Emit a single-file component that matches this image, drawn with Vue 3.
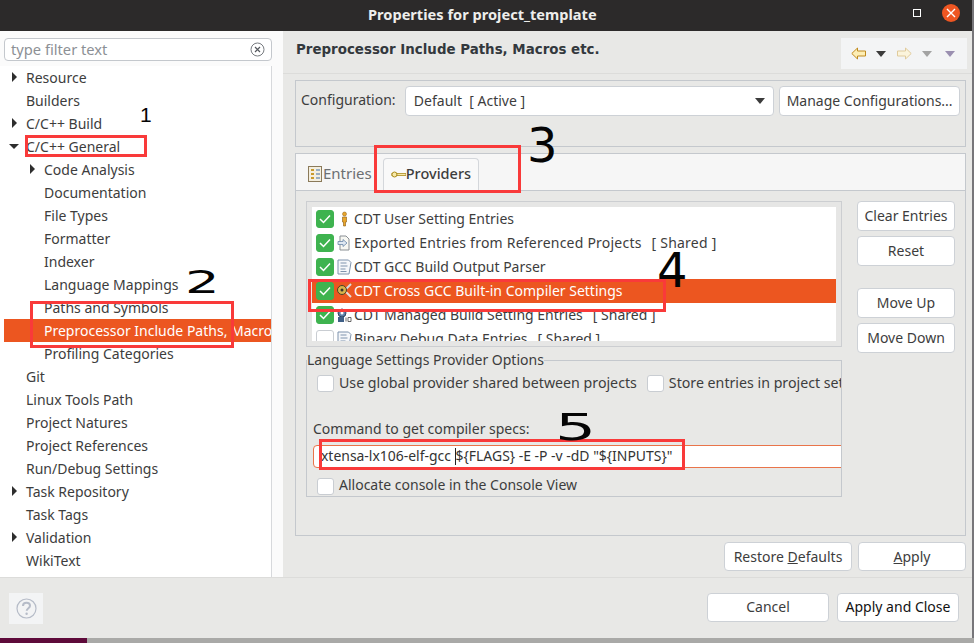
<script setup>
const tree = [
  { t: 'Resource', a: 'r' }, { t: 'Builders' }, { t: 'C/C++ Build', a: 'r' }, { t: 'C/C++ General', a: 'd' },
  { t: 'Code Analysis', a: 'r', c: 1 }, { t: 'Documentation', c: 1 }, { t: 'File Types', c: 1 }, { t: 'Formatter', c: 1 },
  { t: 'Indexer', c: 1 }, { t: 'Language Mappings', c: 1 }, { t: 'Paths and Symbols', c: 1 },
  { t: 'Preprocessor Include Paths, Macros etc.', c: 1, s: 1 }, { t: 'Profiling Categories', c: 1 },
  { t: 'Git' }, { t: 'Linux Tools Path' }, { t: 'Project Natures' }, { t: 'Project References' },
  { t: 'Run/Debug Settings' }, { t: 'Task Repository', a: 'r' }, { t: 'Task Tags' }, { t: 'Validation', a: 'r' }, { t: 'WikiText' }
]
const providers = [
  { t: 'CDT User Setting Entries', on: 1, i: 'user' },
  { t: 'Exported Entries from Referenced Projects', sh: 1, on: 1, i: 'export', wide: 1 },
  { t: 'CDT GCC Build Output Parser', on: 1, i: 'doc' },
  { t: 'CDT Cross GCC Built-in Compiler Settings', on: 1, i: 'tool', s: 1 },
  { t: 'CDT Managed Build Setting Entries', sh: 1, on: 1, i: 'managed' },
  { t: 'Binary Debug Data Entries', sh: 1, i: 'doc' }
]
</script>

<template>
  <div class="screen">
    <div class="window">
      <header class="title">
        <span class="title-text">Properties for project_template</span>
        <span class="win-max"></span>
        <span class="win-close">
          <svg width="12" height="12" viewBox="0 0 12 12"><path d="M2 2l8 8M10 2l-8 8" stroke="#fff" stroke-width="1.4" fill="none"/></svg>
        </span>
      </header>

      <div class="body">
        <aside class="side">
          <div class="filter">
            <span class="filter-text">type filter text</span>
            <svg width="15" height="15" viewBox="0 0 15 15"><circle cx="7.5" cy="7.5" r="6.5" fill="none" stroke="#777b80"/><path d="M5 5l5 5M10 5l-5 5" stroke="#55595e" stroke-width="1.2"/></svg>
          </div>
          <ul class="tree">
            <li v-for="n in tree" :key="n.t" class="node" :class="{ child: n.c, sel: n.s }">
              <span v-if="n.a === 'r'" class="arrow-r"></span>
              <span v-if="n.a === 'd'" class="arrow-d"></span>
              <span class="node-text">{{ n.t }}</span>
            </li>
          </ul>
        </aside>

        <main class="main">
          <div class="head">
            <h1>Preprocessor Include Paths, Macros etc.</h1>
            <div class="nav">
              <svg width="15" height="13" viewBox="0 0 15 13"><path d="M.8 6.500L6.500 1v3h8v5h-8v3z" fill="#fdeeb5" stroke="#c08a1e"/></svg>
              <span class="tri dark"></span>
              <svg class="fwd" width="15" height="13" viewBox="0 0 15 13"><path d="M14.200 6.500L8.500 1v3h-8v5h8v3z" fill="#fbf4dc" stroke="#e0cb9c"/></svg>
              <span class="tri grey"></span>
              <span class="tri purple"></span>
            </div>
          </div>

          <section class="config">
            <label>Configuration:</label>
            <div class="select"><span class="lift">Default&nbsp; [ Active ]</span><span class="tri dark"></span></div>
            <button class="btn manage">Manage Configurations...</button>
          </section>

          <section class="folder">
            <div class="tabs">
              <div class="tab">
                <svg width="14" height="16" viewBox="0 0 14 16"><rect x=".5" y=".5" width="13" height="15" fill="#f4efe0" stroke="#8b7a5a"/><path d="M3 3h3v2H3zM3 7h3v2H3zM3 11h3v2H3z" fill="#c99a2e"/><path d="M8 4h4M8 8h4M8 12h4" stroke="#3f6fa8"/></svg>
                <span class="lift">Entries</span>
              </div>
              <div class="tab active">
                <svg width="15" height="9" viewBox="0 0 15 9"><circle cx="3.500" cy="4.500" r="2.500" fill="#f7e9a8" stroke="#a98a1a"/><path d="M6 3.500h9v2H6z" fill="#f7e9a8" stroke="#a98a1a" stroke-width=".8"/><path d="M0 3v3" stroke="#a98a1a"/></svg>
                <span class="lift2">Providers</span>
              </div>
            </div>
            <div class="panel">
              <div class="left">
                <div class="frame">
                  <div class="list">
                    <div v-for="p in providers" :key="p.t" class="row" :class="{ sel: p.s, wide: p.wide }">
                      <span class="check" :class="{ on: p.on }">
                        <svg v-if="p.on" width="12" height="10" viewBox="0 0 12 10"><path d="M1 5l3.500 3.500L11 1.500" stroke="#fff" stroke-width="1.500" fill="none"/></svg>
                      </span>
                      <svg class="ico" width="15" height="16" viewBox="0 0 15 16">
                        <g v-if="p.i === 'user'"><circle cx="7.500" cy="3" r="2" fill="#e9a62c" stroke="#8a5a10" stroke-width=".5"/><path d="M5.500 6h4v5h-1v4h-2v-4h-1z" fill="#e9a62c" stroke="#8a5a10" stroke-width=".6"/></g>
                        <g v-else-if="p.i === 'export'"><path d="M3 1h6l3 3v11H3z" fill="#f7f7f2" stroke="#8a8f94"/><path d="M1 6.500h5V4.500l4 3.500-4 3.500v-2H1z" fill="#dfe8f2" stroke="#6a86a8" stroke-width=".8"/></g>
                        <g v-else-if="p.i === 'doc'"><path d="M1 1h10.500L14 3.500 12 15H1z" fill="#f5f7fa" stroke="#7f93ad"/><path d="M3.500 4h6M3.500 7h7M3.500 10h5M3.500 12.500h6" stroke="#7f93ad"/></g>
                        <g v-else-if="p.i === 'tool'"><path d="M9 9l5 5" stroke="#e8dcd6" stroke-width="2"/><path d="M14 1L8 7" stroke="#d6dbe2" stroke-width="2"/><circle cx="5" cy="7" r="4.500" fill="#d8b34a" stroke="#4a3f28"/><circle cx="5" cy="7" r="1.500" fill="#333"/></g>
                        <g v-else><circle cx="5" cy="6" r="4" fill="#5d7fa8" stroke="#2f4560"/><circle cx="5" cy="6" r="1.500" fill="#fff"/><rect x="1" y="10" width="6" height="5" fill="#3f5f86"/><rect x="8" y="10" width="7" height="5" fill="#fff"/><path d="M9 10.500v4M11 10.500h3v4h-3z" stroke="#444" fill="none" stroke-width=".8"/></g>
                      </svg>
                      <span class="row-text lift">{{ p.t }}<span v-if="p.sh" class="shared">[ Shared ]</span></span>
                    </div>
                  </div>
                </div>

                <fieldset class="opts">
                  <legend>Language Settings Provider Options</legend>
                  <div class="opt-row">
                    <label class="opt"><span class="check"></span><span class="lift">Use global provider shared between projects</span></label>
                    <label class="opt"><span class="check"></span><span class="lift">Store entries in project settings folder</span></label>
                  </div>
                  <div class="cmd-label">Command to get compiler specs:</div>
                  <div class="cmd"><span class="lift">xtensa-lx106-elf-gcc </span><span class="caret"></span><span class="lift">${FLAGS} -E -P -v -dD "${INPUTS}"</span></div>
                  <div class="alloc"><span class="check"></span>Allocate console in the Console View</div>
                </fieldset>
              </div>

              <div class="side-btns">
                <button class="btn">Clear Entries</button>
                <button class="btn">Reset</button>
                <button class="btn gap">Move Up</button>
                <button class="btn">Move Down</button>
              </div>
            </div>
          </section>

          <div class="restore">
            <button class="btn r1">Restore <u>D</u>efaults</button>
            <button class="btn r2"><u>A</u>pply</button>
          </div>
        </main>
      </div>

      <footer class="foot">
        <div class="help">
          <svg width="21" height="21" viewBox="0 0 21 21"><circle cx="10.500" cy="10.500" r="9.500" fill="none" stroke="#b6bcc8" stroke-width="1.200"/><path d="M7 8c0-2 1.500-3.200 3.500-3.200S14 6 14 7.800c0 2.400-3.300 2.400-3.300 5" fill="none" stroke="#b6bcc8" stroke-width="2"/><circle cx="10.600" cy="15.800" r="1.200" fill="#b6bcc8"/></svg>
        </div>
        <div class="foot-btns">
          <button class="btn f1">Cancel</button>
          <button class="btn f2">Apply and Close</button>
        </div>
      </footer>
    </div>

    <div class="desk">
      <span class="d1"></span><span class="d2"></span>
    </div>

    <i class="mark m1"></i><i class="mark m2"></i><i class="mark m3"></i><i class="mark m4"></i><i class="mark m5"></i>
    <span class="digit n1">1</span><span class="digit n2">2</span><span class="digit n3">3</span><span class="digit n4">4</span><span class="digit n5">5</span>
  </div>
</template>

<style>
html, body { margin: 0; padding: 0; background: #6b6b6b; }
</style>

<style scoped>
* { box-sizing: border-box; }
.screen { position: relative; width: 974px; height: 643px; overflow: hidden; background: #77767a; font-family: "Noto Sans", sans-serif; font-size: 14px; color: #3d3d3d; }
.window { width: 972px; height: 638px; display: flex; flex-direction: column; background: #e8e8e6; }

.title { height: 31px; flex: none; background: #2c2a2a; position: relative; }
.title-text { position: absolute; left: 368px; top: 4px; color: #eeeeec; font-weight: 700; font-size: 14.600px; white-space: nowrap; }
.win-max { position: absolute; left: 913px; top: 9px; width: 8px; height: 8px; border: 1px solid #fff; }
.win-close { position: absolute; left: 942px; top: 4px; width: 18px; height: 18px; border-radius: 50%; background: #ee5622; display: flex; align-items: center; justify-content: center; }

.body { flex: 1; display: flex; min-height: 0; }
.side { width: 283px; flex: none; background: #fbfbfb; display: flex; flex-direction: column; padding-top: 7px; overflow: hidden; }
.filter { margin-left: 4px; width: 268px; height: 23px; border: 1px solid #c4c8cd; border-radius: 4px; display: flex; align-items: center; justify-content: space-between; padding: 0 6px; flex: none; background: #fff; }
.filter-text { color: #8c9095; font-size: 14.700px; position: relative; top: -1px; }
.tree { list-style: none; margin: 5px 0 0; padding: 0; width: 272px; flex: 1; background: #fff; border-right: 1px solid #d7d9dc; }
.node { height: 23px; display: flex; align-items: center; padding-left: 26px; position: relative; white-space: nowrap; overflow: hidden; }
.node.child { padding-left: 44px; }
.node.sel { background: #ec5620; color: #fff; margin-left: 4px; padding-left: 40px; }
.arrow-r { position: absolute; left: 12px; top: 6px; border-left: 5px solid #2e2e2e; border-top: 5px solid transparent; border-bottom: 5px solid transparent; }
.child .arrow-r { left: 30px; }
.arrow-d { position: absolute; left: 9px; top: 9px; border-top: 5px solid #2e2e2e; border-left: 5px solid transparent; border-right: 5px solid transparent; }

.main { flex: 1; min-width: 0; padding: 0 6px 0 12px; display: flex; flex-direction: column; }
.head { height: 43px; margin-left: -12px; margin-right: -6px; padding: 7px 5px 0 13px; border-bottom: 1px solid #dcdcda; display: flex; justify-content: space-between; flex: none; }
.head h1 { margin: 1px 0 0; font: 700 13.400px "DejaVu Sans", sans-serif; color: #33383d; line-height: 22px; }
.nav { width: 126px; height: 31px; background: #f3f4f5; display: flex; align-items: center; padding-left: 10px; gap: 10px; }
.fwd { margin-left: 1px; }
.tri { display: inline-block; width: 0; height: 0; border-top: 6px solid #3b3b3b; border-left: 5px solid transparent; border-right: 5px solid transparent; }
.tri.grey { border-top-color: #a3a3a3; }
.tri.purple { border-top-color: #9a8fb0; margin-left: 3px; }

.lift { position: relative; top: -1px; }
.lift2 { position: relative; top: -2px; }
.config { margin-top: 6px; height: 67px; border: 1px solid #c4c8cd; padding: 5px 5px 0 5px; display: flex; align-items: flex-start; flex: none; }
.config label { width: 104px; line-height: 28px; }
.select { width: 370px; height: 30px; background: #fff; border: 1px solid #cdd1d6; border-radius: 4px; display: flex; align-items: center; justify-content: space-between; padding: 0 8px; }
.btn { height: 30px; padding: 0 0 2px; background: #fff; border: 1px solid #cdd1d6; border-radius: 4px; font: inherit; color: #3d3d3d; text-align: center; }
.manage { width: 181px; margin-left: 5px; }

.folder { margin-top: 6px; height: 383px; border: 1px solid #c4c8cd; display: flex; flex-direction: column; flex: none; }
.tabs { height: 37px; background: #f6f6f6; border-bottom: 1px solid #c4c8cd; display: flex; align-items: flex-end; padding-left: 12px; flex: none; }
.tab { height: 33px; display: flex; align-items: center; gap: 1px; color: #6c6f72; font-size: 15px; }
.tab.active { width: 96px; height: 33px; margin-left: 11px; margin-bottom: -1px; padding-left: 7px; gap: 0; background: #f9f9f9; border: 1px solid #d4d7db; border-bottom-color: #f9f9f9; border-radius: 4px 4px 0 0; color: #3d3d3d; font-weight: 500; font-size: 14.500px; }
.panel { flex: 1; display: flex; padding: 10px 0 0 10px; min-height: 0; }
.left { width: 536px; flex: none; }
.frame { height: 146px; border: 1px solid #ccced1; padding: 5px; background: #e6e6e5; }
.list { height: 134px; width: 524px; background: #fff; overflow: hidden; }
.row { height: 24px; display: flex; align-items: center; padding-left: 4px; white-space: nowrap; }
.row.sel { background: #ec5620; color: #fff; }
.row.wide { letter-spacing: .22px; }
.check { display: inline-flex; align-items: center; justify-content: center; width: 18px; height: 18px; border: 1px solid #c9cdd2; border-radius: 3px; background: #fff; flex: none; }
.check.on { background: #3eb34f; border-color: #3eb34f; }
.ico { margin-left: 3px; margin-right: 2px; flex: none; }
.shared { margin-left: 10px; }

.opts { margin: 4px 0 0; padding: 0; min-width: 0; width: 536px; height: 146px; border: 1px solid #c4c8cd; overflow: hidden; }
.opts legend { padding: 0; margin: 0; line-height: 19px; position: relative; top: -1px; }
.opt-row { display: flex; margin-top: 3px; padding-left: 10px; white-space: nowrap; font-size: 14.200px; }
.opt { display: flex; align-items: center; gap: 5px; height: 20px; margin-right: 10px; }
.opt .check { width: 17px; height: 17px; }
.cmd-label { margin: 26px 0 0 6px; line-height: 20px; }
.cmd { margin: 6px 0 0 6px; height: 23px; width: 540px; background: #fff; border: 1px solid #e9744a; border-radius: 4px 0 0 4px; display: flex; align-items: center; padding-left: 7px; white-space: pre; color: #333; font-size: 13.950px; }
.caret { width: 1px; height: 17px; background: #222; }
.alloc { margin: 10px 0 0 10px; height: 14px; display: flex; align-items: flex-start; gap: 5px; white-space: nowrap; line-height: 14px; }
.alloc .check { width: 17px; height: 17px; }

.side-btns { margin-left: 15px; width: 98px; display: flex; flex-direction: column; gap: 5px; }
.side-btns .btn { width: 98px; flex: none; }
.side-btns .gap { margin-top: 17px; }

.restore { margin-top: 6px; height: 29px; display: flex; justify-content: flex-end; gap: 6px; flex: none; }
.restore .btn { height: 29px; padding-bottom: 0; }
.r1 { width: 128px; }
.r2 { width: 108px; }

.foot { height: 61px; flex: none; border-top: 1px solid #dcdcda; display: flex; justify-content: space-between; padding: 15px 13px 0 9px; }
.help { width: 34px; height: 31px; background: #f3f4f5; display: flex; align-items: center; justify-content: center; }
.foot-btns { display: flex; gap: 8px; }
.foot-btns .btn { height: 29px; width: 122px; }
.f2 { color: #111; }

.desk { height: 5px; display: flex; }
.d1 { width: 87px; background: #5e0a3a; }
.d2 { flex: 1; background: #a9a9a7; }

.mark { position: absolute; border: 3px solid #f93a3a; pointer-events: none; }
.m1 { left: 25px; top: 135px; width: 122px; height: 22px; }
.m2 { left: 30px; top: 301px; width: 204px; height: 47px; }
.m3 { left: 374px; top: 145px; width: 147px; height: 48px; }
.m4 { left: 308px; top: 279px; width: 358px; height: 33px; }
.m5 { left: 319px; top: 439px; width: 366px; height: 31px; }
.digit { position: absolute; color: #050505; font-family: "DejaVu Sans", sans-serif; line-height: 1; white-space: nowrap; transform-origin: left top; }
.n1 { left: 140px; top: 104px; font-size: 21px; font-family: "Liberation Sans", sans-serif; }
.n2 { left: 185px; top: 266px; font-size: 32px; transform: scaleX(1.7); }
.n3 { left: 527px; top: 121px; font-size: 48px; }
.n4 { left: 657px; top: 246px; font-size: 48px; }
.n5 { left: 555px; top: 408px; font-size: 38px; transform: scaleX(1.700); }
</style>
